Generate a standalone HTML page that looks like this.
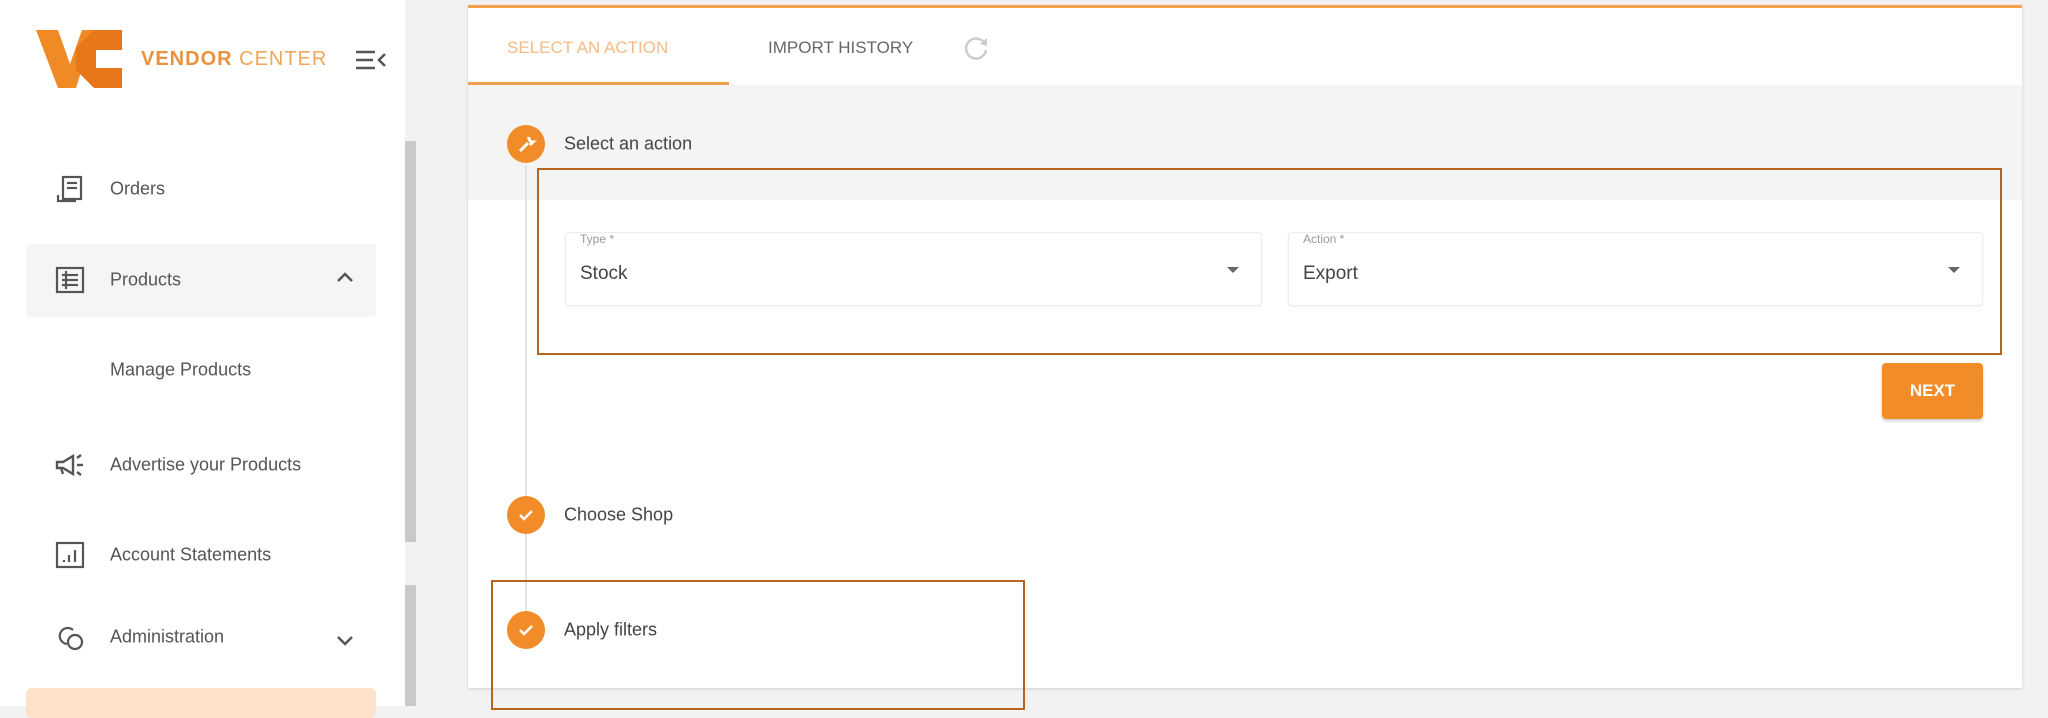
<!DOCTYPE html>
<html><head><style>
*{margin:0;padding:0;box-sizing:border-box}
body{width:2048px;height:706px;overflow:hidden;background:#f2f2f2;font-family:"Liberation Sans",sans-serif;position:relative;color:#444}
.a{position:absolute}
.side{left:0;top:0;width:405px;height:706px;background:#fff}
.mi{position:absolute;left:110px;font-size:18px;color:#555;transform:translateY(-50%)}
.ic{position:absolute;left:55px;width:30px;height:30px;transform:translateY(-50%)}
.card{left:468px;top:5px;width:1554px;height:683px;background:#fff;border-top:3px solid #f5a04a;box-shadow:0 1px 3px rgba(0,0,0,.15)}
.circ{position:absolute;width:38px;height:38px;border-radius:50%;background:#f28c28;left:507px;display:flex;align-items:center;justify-content:center;transform:translateY(-50%)}
.st{position:absolute;left:564px;font-size:18px;color:#444;transform:translateY(-50%)}
.fld{position:absolute;top:232px;height:74px;background:#fff;border:1px solid #ececec;border-radius:4px;box-shadow:0 1px 2px rgba(0,0,0,.06)}
.lbl{position:absolute;left:14px;top:-1px;font-size:12px;color:#999}
.val{position:absolute;left:14px;top:30px;font-size:19px;color:#444}
.arr{position:absolute;right:22px;top:34px;width:0;height:0;border-left:6px solid transparent;border-right:6px solid transparent;border-top:6px solid #666}
</style></head><body>
<div class="a side"></div>
<!-- scrollbar -->
<div class="a" style="left:405px;top:141px;width:11px;height:401px;background:#c9c9c9"></div>
<div class="a" style="left:405px;top:585px;width:11px;height:121px;background:#c9c9c9"></div>
<!-- logo -->
<svg class="a" style="left:36px;top:28px" width="86" height="62" viewBox="0 0 86 62">
<polygon points="0,2 22,2 34,36 46,2 58,2 40,60 22,60" fill="#f08a24"/>
<polygon points="40,20 58,2 86,2 86,22 60,22 60,40 86,40 86,60 58,60 40,42" fill="#e8771a"/>
</svg>
<div class="a" style="left:141px;top:48px;font-size:20px;font-weight:bold;color:#e9913d;letter-spacing:1px">VENDOR <span style="font-weight:normal;color:#efa55b">CENTER</span></div>
<svg class="a" style="left:355px;top:49px" width="32" height="22" viewBox="0 0 32 22"><g stroke="#555" stroke-width="2.5" fill="none"><line x1="1" y1="3" x2="20" y2="3"/><line x1="1" y1="11" x2="18" y2="11"/><line x1="1" y1="19" x2="20" y2="19"/><polyline points="30,5 24,11 30,17"/></g></svg>
<!-- menu -->
<svg class="ic" style="top:189px" viewBox="0 0 30 30"><g stroke="#555" stroke-width="2.2" fill="none"><rect x="8" y="3" width="18" height="22"/><line x1="12" y1="9" x2="22" y2="9"/><line x1="12" y1="14" x2="22" y2="14"/><path d="M3 21v6h18"/></g></svg>
<div class="mi" style="top:189px">Orders</div>
<div class="a" style="left:26px;top:244px;width:350px;height:73px;background:#f5f5f5;border-radius:4px"></div>
<svg class="ic" style="top:280px" viewBox="0 0 30 30"><g stroke="#555" stroke-width="2.2" fill="none"><rect x="2" y="3" width="26" height="24"/><line x1="7" y1="10" x2="23" y2="10"/><line x1="7" y1="15" x2="23" y2="15"/><line x1="7" y1="20" x2="23" y2="20"/><line x1="11" y1="6" x2="11" y2="24"/></g></svg>
<div class="mi" style="top:280px">Products</div>
<svg class="a" style="left:336px;top:271px" width="18" height="12" viewBox="0 0 18 12"><polyline points="2,10 9,3 16,10" stroke="#555" stroke-width="2.5" fill="none"/></svg>
<div class="mi" style="top:370px">Manage Products</div>
<svg class="ic" style="top:465px" viewBox="0 0 30 30"><g stroke="#555" stroke-width="2.4" fill="none"><path d="M2 12h6l10-6v18L8 18H2z"/><path d="M6 18l2 6"/><line x1="22" y1="8" x2="26" y2="5"/><line x1="22" y1="15" x2="28" y2="15"/><line x1="22" y1="22" x2="26" y2="25"/></g></svg>
<div class="mi" style="top:465px">Advertise your Products</div>
<svg class="ic" style="top:555px" viewBox="0 0 30 30"><g stroke="#555" stroke-width="2.2" fill="none"><rect x="2" y="3" width="26" height="24"/><line x1="9" y1="20" x2="9" y2="22"/><line x1="14" y1="15" x2="14" y2="22"/><line x1="20" y1="10" x2="20" y2="22"/></g></svg>
<div class="mi" style="top:555px">Account Statements</div>
<svg class="ic" style="top:637px" viewBox="0 0 30 30"><g stroke="#555" stroke-width="2.2" fill="none"><path d="M18 8a8 8 0 1 0-6 14"/><circle cx="20" cy="20" r="7"/></g></svg>
<div class="mi" style="top:637px">Administration</div>
<svg class="a" style="left:336px;top:634px" width="18" height="12" viewBox="0 0 18 12"><polyline points="2,3 9,10 16,3" stroke="#555" stroke-width="2.5" fill="none"/></svg>
<div class="a" style="left:26px;top:688px;width:350px;height:30px;background:#fde1c8;border-radius:6px"></div>
<!-- card -->
<div class="a card"></div>
<div class="a" style="left:468px;top:82px;width:261px;height:3px;background:#f0a04e"></div>
<div class="a" style="left:507px;top:38px;font-size:17px;color:#f5bb84">SELECT AN ACTION</div>
<div class="a" style="left:768px;top:38px;font-size:17px;color:#666">IMPORT HISTORY</div>
<svg class="a" style="left:963px;top:34px" width="28" height="28" viewBox="0 0 28 28"><path d="M22 10a10 10 0 1 0 1 6" stroke="#ccc" stroke-width="2.5" fill="none"/><polygon points="24,4 24,12 17,10" fill="#ccc"/></svg>
<div class="a" style="left:468px;top:85px;width:1554px;height:115px;background:#f4f4f4"></div>
<div class="a" style="left:525px;top:165px;width:2px;height:450px;background:#e2e2e2"></div>
<div class="circ" style="top:144px"><svg width="22" height="22" viewBox="0 0 22 22"><path d="M5 18L13 10M14 4a4 4 0 0 0 4 5l-3 3" stroke="#fff" stroke-width="3" fill="none"/></svg></div>
<div class="st" style="top:144px">Select an action</div>
<div class="fld" style="left:565px;width:697px"><div class="lbl">Type *</div><div class="val">Stock</div><div class="arr"></div></div>
<div class="fld" style="left:1288px;width:695px"><div class="lbl">Action *</div><div class="val">Export</div><div class="arr"></div></div>
<div class="a" style="left:537px;top:168px;width:1465px;height:187px;border:2px solid #b5651d"></div>
<div class="a" style="left:1882px;top:363px;width:101px;height:56px;background:#f28c28;border-radius:4px;box-shadow:0 2px 3px rgba(0,0,0,.2);color:#fff;font-size:17px;font-weight:bold;display:flex;align-items:center;justify-content:center">NEXT</div>
<div class="circ" style="top:515px"><svg width="20" height="20" viewBox="0 0 20 20"><polyline points="4,10 8,14 16,6" stroke="#fff" stroke-width="2.5" fill="none"/></svg></div>
<div class="st" style="top:515px">Choose Shop</div>
<div class="circ" style="top:630px"><svg width="20" height="20" viewBox="0 0 20 20"><polyline points="4,10 8,14 16,6" stroke="#fff" stroke-width="2.5" fill="none"/></svg></div>
<div class="st" style="top:630px">Apply filters</div>
<div class="a" style="left:491px;top:580px;width:534px;height:130px;border:2px solid #b5651d"></div>
</body></html>
